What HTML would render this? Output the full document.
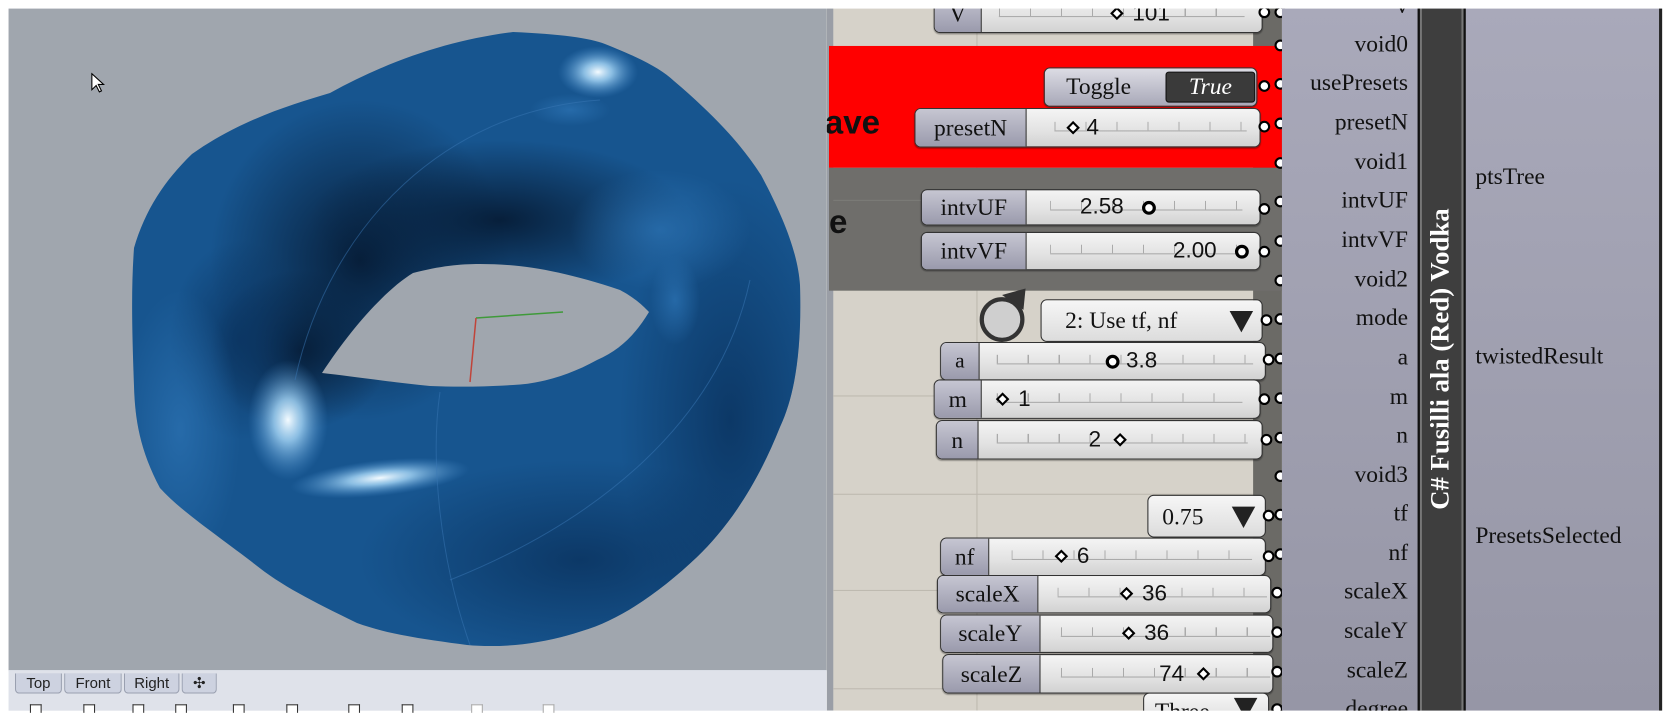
<!DOCTYPE html>
<html><head><meta charset="utf-8"><style>
*{margin:0;padding:0;box-sizing:border-box}
body{width:1674px;height:716px;overflow:hidden;background:#fff;position:relative;font-family:"Liberation Serif",serif}
#s{position:absolute;left:0;top:0;width:1567px;height:670px;transform-origin:0 0;transform:scale(1.0683,1.0687);overflow:hidden}
.a{position:absolute}
.sl{position:absolute;border:1.5px solid #333;border-radius:6px;background:linear-gradient(#f4f4f4,#e2e2e2 60%,#d2d2d2);overflow:hidden;box-shadow:0 1px 1px rgba(0,0,0,.3)}
.lb{position:absolute;left:0;top:0;bottom:0;background:linear-gradient(#c6c6d2,#9a9aac);border-right:1.5px solid #333;font:22px "Liberation Serif",serif;color:#111;text-align:center;display:flex;align-items:center;justify-content:center}
.tk{position:absolute;top:50%;height:9px;margin-top:-6px;border-bottom:1px solid #aaa;background:repeating-linear-gradient(90deg,#aaa 0 1px,transparent 1px 29px)}
.v{position:absolute;top:50%;transform:translateY(-50%);font:21px "Liberation Sans",sans-serif;color:#111}
.d{position:absolute;top:50%;width:9px;height:9px;margin:-5px 0 0 -5px;border:2px solid #000;background:#fff;transform:rotate(45deg)}
.c{position:absolute;top:50%;width:13px;height:13px;margin:-6px 0 0 -6px;border:3px solid #000;border-radius:50%;background:#fff}
.dd{position:absolute;border:1.5px solid #333;border-radius:6px;background:linear-gradient(#f6f6f6,#dcdcdc);font:22px "Liberation Serif",serif;color:#111}
.tri{position:absolute;width:0;height:0;border-left:11px solid transparent;border-right:11px solid transparent;border-top:20px solid #222}
.in{position:absolute;right:249px;font:22px "Liberation Serif",serif;color:#111;text-align:right;width:130px}
.cn{position:absolute;width:11px;height:11px;border:2.5px solid #000;border-radius:50%;background:#fff}
.tab{position:absolute;top:630px;height:19px;background:#cdd2e0;border:1px solid #9aa0b0;border-top:none;font:14px "Liberation Sans",sans-serif;color:#222;text-align:center;line-height:18px;border-radius:0 0 4px 4px}
.sq{position:absolute;top:659px;width:11px;height:8px;border:1px solid #333;background:#fff;border-bottom:none}
</style></head><body>
<div id="s">
<div class="a" style="left:8px;top:8px;width:766px;height:620px;background:#a0a6ae"></div>
<div class="a" style="left:8px;top:627px;width:766px;height:38px;background:#dfe2ea"></div>
<div class="tab" style="left:14px;width:44px">Top</div>
<div class="tab" style="left:60px;width:54px">Front</div>
<div class="tab" style="left:116px;width:52px">Right</div>
<div class="tab" style="left:170px;width:33px">✣</div>
<div class="sq" style="left:28px"></div><div class="sq" style="left:78px"></div><div class="sq" style="left:124px"></div><div class="sq" style="left:164px"></div><div class="sq" style="left:218px"></div><div class="sq" style="left:268px"></div><div class="sq" style="left:326px"></div><div class="sq" style="left:376px"></div><div class="sq" style="left:441px;border-color:#aaa"></div><div class="sq" style="left:508px;border-color:#aaa"></div>
<svg class="a" style="left:85px;top:68px" width="14" height="20" viewBox="0 0 14 20"><path d="M1 1 L1 16 L5 12 L8 18 L10 17 L7 11 L12 11 Z" fill="#fff" stroke="#000" stroke-width="1"/></svg>

<div class="a" style="left:774px;top:8px;width:426px;height:657px;background:#d6d2c9;overflow:hidden">
<div class="a" style="left:0;top:0;width:6px;height:657px;background:#9a9ea6"></div>
<div class="a" style="left:140px;top:0;width:1px;height:657px;background:#beb9b0"></div>
<div class="a" style="left:6px;top:362px;width:420px;height:1px;background:#beb9b0"></div>
<div class="a" style="left:6px;top:454px;width:420px;height:1px;background:#beb9b0"></div>
<div class="a" style="left:6px;top:544px;width:420px;height:1px;background:#beb9b0"></div>
<div class="a" style="left:6px;top:636px;width:420px;height:1px;background:#beb9b0"></div>
<div class="a" style="left:399px;top:0;width:27px;height:657px;background:#6b6a66"></div>
<div class="a" style="left:2px;top:35px;width:424px;height:114px;background:#ff0000"></div>
<div class="a" style="left:2px;top:149px;width:424px;height:115px;background:#6f6e6b"></div>
<div class="a" style="left:6px;top:179px;width:134px;height:1px;background:#7c7b78"></div>
<div class="a" style="left:-14px;top:89px;font:bold 31px 'Liberation Sans',sans-serif;color:#111">rave</div>
<div class="a" style="left:2px;top:182px;font:bold 31px 'Liberation Sans',sans-serif;color:#111">e</div>
</div>

<div class="sl" style="left:874px;top:-6px;width:308px;height:37px"><div class="lb" style="width:44px">V</div><div class="tk" style="left:60px;width:230px"></div><div class="d" style="left:171px"></div><div class="v" style="left:185px">101</div></div>
<div class="sl" style="left:977px;top:63px;width:200px;height:37px;background:linear-gradient(#dcdce4,#a8a8b8)"><div class="a" style="left:20px;top:4px;font:22px 'Liberation Serif',serif;color:#111">Toggle</div><div class="a" style="left:113px;top:3px;width:84px;height:29px;background:#3a3a3a;border:1.5px solid #111;border-radius:3px;font:italic 22px 'Liberation Serif',serif;color:#fff;text-align:center;line-height:26px">True</div></div>
<div class="sl" style="left:856px;top:101px;width:324px;height:37px"><div class="lb" style="width:104px">presetN</div><div class="tk" style="left:130px;width:180px"></div><div class="d" style="left:148px"></div><div class="v" style="left:160px">4</div></div>
<div class="sl" style="left:862px;top:177px;width:318px;height:34px"><div class="lb" style="width:98px">intvUF</div><div class="tk" style="left:120px;width:180px"></div><div class="v" style="left:148px">2.58</div><div class="c" style="left:212px"></div></div>
<div class="sl" style="left:862px;top:217px;width:318px;height:36px"><div class="lb" style="width:98px">intvVF</div><div class="tk" style="left:120px;width:180px"></div><div class="v" style="left:235px">2.00</div><div class="c" style="left:299px"></div></div>
<svg class="a" style="left:912px;top:268px" width="54" height="54" viewBox="0 0 54 54"><path d="M26 8 L48 2 L46 22 Z" fill="#333"/><circle cx="26" cy="31" r="19" fill="#cfcfcf" stroke="#333" stroke-width="4"/></svg>
<div class="dd" style="left:974px;top:280px;width:208px;height:40px"><div class="a" style="left:22px;top:6px">2: Use tf, nf</div><div class="tri" style="left:176px;top:10px"></div></div>
<div class="sl" style="left:880px;top:320px;width:305px;height:36px"><div class="lb" style="width:36px;font-size:20px">a</div><div class="tk" style="left:52px;width:240px"></div><div class="c" style="left:160px"></div><div class="v" style="left:173px">3.8</div></div>
<div class="sl" style="left:874px;top:355px;width:306px;height:37px"><div class="lb" style="width:44px">m</div><div class="tk" style="left:58px;width:230px"></div><div class="d" style="left:64px"></div><div class="v" style="left:78px">1</div></div>
<div class="sl" style="left:876px;top:393px;width:306px;height:37px"><div class="lb" style="width:39px">n</div><div class="tk" style="left:56px;width:235px"></div><div class="v" style="left:142px">2</div><div class="d" style="left:172px"></div></div>
<div class="dd" style="left:1074px;top:463px;width:111px;height:40px"><div class="a" style="left:13px;top:7px">0.75</div><div class="tri" style="left:78px;top:10px"></div></div>
<div class="sl" style="left:880px;top:503px;width:305px;height:36px"><div class="lb" style="width:45px">nf</div><div class="tk" style="left:66px;width:225px"></div><div class="d" style="left:113px"></div><div class="v" style="left:127px">6</div></div>
<div class="sl" style="left:877px;top:538px;width:313px;height:36px"><div class="lb" style="width:94px">scaleX</div><div class="tk" style="left:112px;width:196px"></div><div class="d" style="left:177px"></div><div class="v" style="left:191px">36</div></div>
<div class="sl" style="left:880px;top:575px;width:312px;height:36px"><div class="lb" style="width:93px">scaleY</div><div class="tk" style="left:112px;width:196px"></div><div class="d" style="left:176px"></div><div class="v" style="left:190px">36</div></div>
<div class="sl" style="left:882px;top:612px;width:310px;height:37px"><div class="lb" style="width:91px">scaleZ</div><div class="tk" style="left:110px;width:196px"></div><div class="v" style="left:202px">74</div><div class="d" style="left:244px"></div></div>
<div class="dd" style="left:1070px;top:648px;width:118px;height:30px;overflow:hidden"><div class="a" style="left:10px;top:4px">Three</div><div class="tri" style="left:84px;top:4px"></div></div>

<div class="cn" style="left:1178px;top:6px"></div><div class="cn" style="left:1193px;top:6px"></div>
<div class="cn" style="left:1193px;top:37px"></div>
<div class="cn" style="left:1178px;top:75px"></div><div class="cn" style="left:1193px;top:73px"></div>
<div class="cn" style="left:1178px;top:113px"></div><div class="cn" style="left:1193px;top:110px"></div>
<div class="cn" style="left:1193px;top:147px"></div>
<div class="cn" style="left:1178px;top:190px"></div><div class="cn" style="left:1193px;top:183px"></div>
<div class="cn" style="left:1178px;top:230px"></div><div class="cn" style="left:1193px;top:220px"></div>
<div class="cn" style="left:1193px;top:257px"></div>
<div class="cn" style="left:1180px;top:294px"></div><div class="cn" style="left:1193px;top:293px"></div>
<div class="cn" style="left:1182px;top:331px"></div><div class="cn" style="left:1193px;top:330px"></div>
<div class="cn" style="left:1178px;top:368px"></div><div class="cn" style="left:1193px;top:367px"></div>
<div class="cn" style="left:1180px;top:406px"></div><div class="cn" style="left:1193px;top:404px"></div>
<div class="cn" style="left:1193px;top:440px"></div>
<div class="cn" style="left:1182px;top:477px"></div><div class="cn" style="left:1193px;top:476px"></div>
<div class="cn" style="left:1182px;top:515px"></div><div class="cn" style="left:1193px;top:513px"></div>
<div class="cn" style="left:1190px;top:549px"></div>
<div class="cn" style="left:1190px;top:586px"></div>
<div class="cn" style="left:1190px;top:623px"></div>
<div class="cn" style="left:1190px;top:658px"></div>

<div class="a" style="left:1200px;top:8px;width:355px;height:657px;background:linear-gradient(#a9a9ba,#9696a6)"></div>
<div class="a" style="left:1327px;top:8px;width:45px;height:657px;background:#3e3e3e;border-left:2px solid #111;border-right:2px solid #111;box-shadow:inset 2px 0 0 #777,inset -2px 0 0 #777"></div>
<div class="a" style="left:1553px;top:8px;width:3px;height:657px;background:#222"></div>
<div class="a" style="left:1349px;top:336px;transform:translate(-50%,-50%) rotate(-90deg);white-space:nowrap;font:bold 25px 'Liberation Serif',serif;color:#fff">C# Fusilli ala (Red) Vodka</div>
<div class="in" style="top:-8px">v</div>
<div class="in" style="top:28px">void0</div>
<div class="in" style="top:64px">usePresets</div>
<div class="in" style="top:101px">presetN</div>
<div class="in" style="top:138px">void1</div>
<div class="in" style="top:174px">intvUF</div>
<div class="in" style="top:211px">intvVF</div>
<div class="in" style="top:248px">void2</div>
<div class="in" style="top:284px">mode</div>
<div class="in" style="top:321px">a</div>
<div class="in" style="top:358px">m</div>
<div class="in" style="top:394px">n</div>
<div class="in" style="top:431px">void3</div>
<div class="in" style="top:467px">tf</div>
<div class="in" style="top:504px">nf</div>
<div class="in" style="top:540px">scaleX</div>
<div class="in" style="top:577px">scaleY</div>
<div class="in" style="top:614px">scaleZ</div>
<div class="in" style="top:650px">degree</div>
<div class="a" style="left:1381px;top:152px;font:22px 'Liberation Serif',serif;color:#111">ptsTree</div>
<div class="a" style="left:1381px;top:320px;font:22px 'Liberation Serif',serif;color:#111">twistedResult</div>
<div class="a" style="left:1381px;top:488px;font:22px 'Liberation Serif',serif;color:#111">PresetsSelected</div>
<div class="a" style="left:0;top:0;width:1567px;height:8px;background:#fff"></div>
<div class="a" style="left:774px;top:665px;width:793px;height:5px;background:#fff"></div>
<div class="a" style="left:1556px;top:0;width:11px;height:670px;background:#fff"></div>
</div>

<svg class="a" style="left:0;top:0" width="1674" height="716" viewBox="0 0 1674 716">
<defs>
<radialGradient id="dk"><stop offset="0" stop-color="#061c36" stop-opacity=".95"/><stop offset="1" stop-color="#061c36" stop-opacity="0"/></radialGradient>
<radialGradient id="md"><stop offset="0" stop-color="#0b3562" stop-opacity=".9"/><stop offset="1" stop-color="#0b3562" stop-opacity="0"/></radialGradient>
<radialGradient id="hl"><stop offset="0" stop-color="#f4fbff" stop-opacity="1"/><stop offset=".35" stop-color="#a8d8f8" stop-opacity=".8"/><stop offset="1" stop-color="#4a90d0" stop-opacity="0"/></radialGradient>
<radialGradient id="lt"><stop offset="0" stop-color="#2a70b0" stop-opacity=".8"/><stop offset="1" stop-color="#2a70b0" stop-opacity="0"/></radialGradient>
<clipPath id="tc"><path d="M513 32 C560 34 590 38 605 44 C640 58 660 68 674 81 C720 120 745 150 761 175 C785 220 798 255 800 285 C802 350 795 395 780 427 C755 490 725 530 697 557 C660 592 620 620 582 631 C540 645 500 648 467 645 C430 640 390 635 357 623 C310 600 280 585 252 562 C210 530 180 510 160 488 C140 450 135 420 134 386 C132 330 131 290 134 248 C145 210 165 180 192 154 C240 120 290 105 330 93 C390 60 450 40 513 32 Z"/></clipPath>
</defs>
<g clip-path="url(#tc)">
<rect x="100" y="20" width="720" height="640" fill="#17558f"/>
<ellipse cx="730" cy="420" rx="110" ry="240" fill="url(#md)"/>
<ellipse cx="580" cy="560" rx="220" ry="100" fill="url(#md)"/>
<ellipse cx="360" cy="260" rx="150" ry="160" fill="url(#dk)"/>
<ellipse cx="500" cy="220" rx="190" ry="80" fill="url(#dk)"/>
<ellipse cx="300" cy="350" rx="90" ry="80" fill="url(#dk)"/>
<ellipse cx="240" cy="340" rx="70" ry="100" fill="url(#md)"/>
<ellipse cx="180" cy="430" rx="60" ry="140" fill="url(#lt)"/>
<ellipse cx="660" cy="230" rx="90" ry="60" fill="url(#lt)"/>
<ellipse cx="675" cy="300" rx="25" ry="45" fill="url(#lt)"/>
<ellipse cx="288" cy="420" rx="40" ry="60" fill="url(#hl)"/>
<ellipse cx="380" cy="478" rx="90" ry="18" fill="url(#hl)" transform="rotate(-6 380 478)"/>
<ellipse cx="598" cy="72" rx="40" ry="26" fill="url(#hl)"/>
<ellipse cx="570" cy="110" rx="40" ry="16" fill="url(#lt)"/>
<path d="M322 373 C350 330 385 290 413 273 C440 266 460 264 480 264 C520 264 560 270 620 290 C635 298 642 305 649 312 C635 335 620 350 597 360 C570 375 540 384 513 385 C480 387 455 387 430 386 C390 382 350 376 322 373 Z" fill="#a0a6ae"/>
<path d="M600 100 C450 110 330 220 295 380" stroke="#3a78b5" stroke-width="1" fill="none" opacity=".5"/>
<path d="M440 392 C430 460 440 560 470 645" stroke="#3a78b5" stroke-width="1" fill="none" opacity=".5"/>
<path d="M450 580 C600 520 720 420 750 280" stroke="#3a78b5" stroke-width="1" fill="none" opacity=".5"/>
</g>
<line x1="476" y1="318" x2="563" y2="312" stroke="#3f9a3a" stroke-width="1.5"/>
<line x1="476" y1="318" x2="470" y2="382" stroke="#c0443a" stroke-width="1.5"/>
</svg>
</body></html>
